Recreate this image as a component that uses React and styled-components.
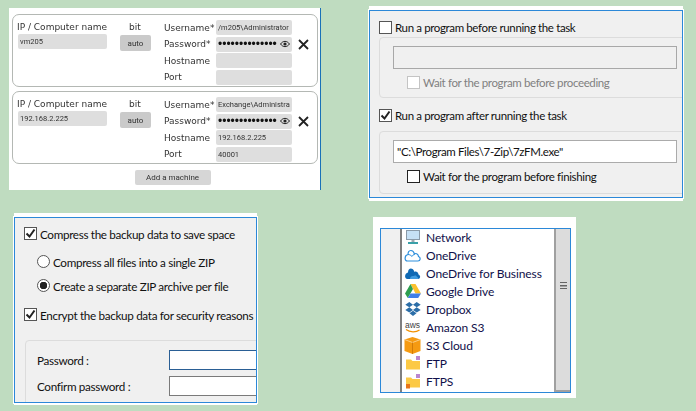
import React from 'react';
import styled, { createGlobalStyle } from 'styled-components';

const GlobalStyle = createGlobalStyle`
  html, body {
    margin: 0;
    padding: 0;
    background: #bfdcc0;
  }
`;

const machines = [
  { ip: 'vm205', user: '/m205\\Administrator', host: '', port: '' },
  { ip: '192.168.2.225', user: 'Exchange\\Administra', host: '192.168.2.225', port: '40001' },
];

const services = [
  ['Network', 'network'],
  ['OneDrive', 'onedrive'],
  ['OneDrive for Business', 'business'],
  ['Google Drive', 'gdrive'],
  ['Dropbox', 'dropbox'],
  ['Amazon S3', 'aws'],
  ['S3 Cloud', 's3'],
  ['FTP', 'ftp'],
  ['FTPS', 'ftps'],
];

const ServiceIcon = ({ kind }) => {
  if (kind === 'network') {
    return (
      <svg width="16" height="16" viewBox="0 0 16 16">
        <rect x="1.500" y="1.500" width="13" height="9" fill="#c5e0f5" stroke="#8a9aa8" />
        <rect x="6.500" y="11" width="3" height="2" fill="#a0a8b0" />
        <rect x="3" y="13" width="10" height="2" fill="#3aa0a8" />
      </svg>
    );
  }
  if (kind === 'onedrive') {
    return (
      <svg width="17" height="16" viewBox="0 0 17 16">
        <path d="M3.500 14h10.500c2.500 0 3-3.500.5-4.500C14 6.500 11.500 6 10.500 7 9 2 4 2.500 4 7.500.5 8 0 14 3.500 14z" fill="#fff" stroke="#2f8fdc" strokeWidth="1.200" />
        <path d="M4 7.500c1.500 0 3 .8 4 2M10.500 7c-1 .5-2 1.500-2.500 2.500" fill="none" stroke="#2f8fdc" />
      </svg>
    );
  }
  if (kind === 'business') {
    return (
      <svg width="17" height="16" viewBox="0 0 17 16">
        <path d="M3.500 14h10.500c2.500 0 3-3.500.5-4.500C14 6.500 11.500 6 10.500 7 9 2 4 2.500 4 7.500.5 8 0 14 3.500 14z" fill="#0f69b4" />
        <path d="M6 14c0-2.500 2-3.500 3.500-3 1-1 3.500-.5 3.500 1 1 .2 1.500 1 1 2z" fill="#3f9be0" />
      </svg>
    );
  }
  if (kind === 'gdrive') {
    return (
      <svg width="16" height="16" viewBox="0 0 16 16">
        <path d="M5.500 1h5L16 10.500h-5.500z" fill="#fbc02d" />
        <path d="M5.500 1L0 10.500 2.800 15 8 6z" fill="#2e9e4f" />
        <path d="M2.800 15h10.400L16 10.500H5.500z" fill="#3f7fe8" />
      </svg>
    );
  }
  if (kind === 'dropbox') {
    return (
      <svg width="16" height="16" viewBox="0 0 16 16" fill="#2c6ea8">
        <path d="M4.300 1L.3 3.700l4 2.600 3.700-2.600zM11.700 1L8 3.700l3.700 2.600 4-2.600zM.3 8.900l4 2.600L8 8.900 4.300 6.300zM11.700 6.300L8 8.900l3.700 2.600 4-2.600zM4.500 12.300L8 15l3.500-2.700L8 9.800z" />
      </svg>
    );
  }
  if (kind === 'aws') {
    return (
      <AwsMark>
        aws
        <svg width="16" height="4" viewBox="0 0 16 4">
          <path d="M1 .5c4 3 10 3 13.500.5" fill="none" stroke="#f29100" strokeWidth="1.200" />
        </svg>
      </AwsMark>
    );
  }
  if (kind === 's3') {
    return (
      <svg width="17" height="17" viewBox="0 0 17 17">
        <path d="M8.500 0l8 2.500v11.500l-8 3-8-3V2.500z" fill="#f59a12" />
        <path d="M.5 2.500l8 3 8-3" fill="none" stroke="#fdd9a0" strokeWidth=".8" />
        <path d="M8.500 5.500V17" stroke="#c87408" strokeWidth=".8" />
      </svg>
    );
  }
  return (
    <svg width="16" height="16" viewBox="0 0 16 16">
      <path d="M1 4.500h5L7.500 6H15v8.500H1z" fill="#fcc945" />
      <path d="M11 1h4v4h-4z" fill="#a45fc0" opacity=".75" />
      {kind === 'ftps' && <rect x="1" y="11" width="4" height="4.500" fill="#e8751a" />}
    </svg>
  );
};

const CheckMark = () => (
  <svg width="11" height="11" viewBox="0 0 11 11">
    <path d="M1.500 5.500l3 3 5-7" fill="none" stroke="#222" strokeWidth="2" />
  </svg>
);

const App = () => (
  <>
    <GlobalStyle />
    <Desktop>
      <MachineWindow>
        {machines.map((m) => (
          <MachineCard key={m.ip}>
            <IpColumn>
              <FieldLabel>IP / Computer name</FieldLabel>
              <TextBox $wide>{m.ip}</TextBox>
            </IpColumn>
            <BitColumn>
              <FieldLabel>bit</FieldLabel>
              <BitButton>auto</BitButton>
            </BitColumn>
            <CredentialGrid>
              <FieldLabel>Username*</FieldLabel>
              <TextBox>{m.user}</TextBox>
              <FieldLabel>Password*</FieldLabel>
              <TextBox>
                <Dots>••••••••••••••</Dots>
                <svg width="10" height="8" viewBox="0 0 10 8">
                  <path d="M.5 4C3 .5 7 .5 9.500 4 7 7.500 3 7.500.5 4z" fill="none" stroke="#222" />
                  <circle cx="5" cy="4" r="1.600" fill="#222" />
                </svg>
                <RemoveIcon width="11" height="11" viewBox="0 0 11 11">
                  <path d="M1 1l9 9M10 1l-9 9" stroke="#222" strokeWidth="1.800" />
                </RemoveIcon>
              </TextBox>
              <FieldLabel>Hostname</FieldLabel>
              <TextBox>{m.host}</TextBox>
              <FieldLabel>Port</FieldLabel>
              <TextBox>{m.port}</TextBox>
            </CredentialGrid>
          </MachineCard>
        ))}
        <AddButton>Add a machine</AddButton>
      </MachineWindow>

      <ProgramWindow>
        <CheckRow>
          <CheckBox />
          Run a program before running the task
        </CheckRow>
        <GroupBox $height={61} $top={3}>
          <PathInput $disabled />
          <SubCheckRow $disabled>
            <CheckBox $disabled />
            Wait for the program before proceeding
          </SubCheckRow>
        </GroupBox>
        <CheckRow $top={11}>
          <CheckBox>
            <CheckMark />
          </CheckBox>
          Run a program after running the task
        </CheckRow>
        <GroupBox $height={63} $top={9}>
          <PathInput>"C:\Program Files\7-Zip\7zFM.exe"</PathInput>
          <SubCheckRow>
            <CheckBox $dark />
            Wait for the program before finishing
          </SubCheckRow>
        </GroupBox>
      </ProgramWindow>

      <CompressWindow>
        <CheckRow>
          <CheckBox>
            <CheckMark />
          </CheckBox>
          Compress the backup data to save space
        </CheckRow>
        <RadioRow $top={15}>
          <Radio />
          Compress all files into a single ZIP
        </RadioRow>
        <RadioRow $top={11}>
          <Radio $selected />
          Create a separate ZIP archive per file
        </RadioRow>
        <CheckRow $top={16}>
          <CheckBox>
            <CheckMark />
          </CheckBox>
          Encrypt the backup data for security reasons
        </CheckRow>
        <PasswordGroup>
          <PasswordRow>
            Password :
            <PasswordInput $focused />
          </PasswordRow>
          <PasswordRow>
            Confirm password :
            <PasswordInput />
          </PasswordRow>
        </PasswordGroup>
      </CompressWindow>

      <ServiceWindow>
        <ServiceFrame>
          <LeftStrip />
          <ServiceList>
            {services.map(([name, kind]) => (
              <ServiceRow key={name}>
                <IconSlot>
                  <ServiceIcon kind={kind} />
                </IconSlot>
                {name}
              </ServiceRow>
            ))}
          </ServiceList>
          <SplitterStrip>
            <Grip />
          </SplitterStrip>
        </ServiceFrame>
      </ServiceWindow>
    </Desktop>
  </>
);

const Desktop = styled.div`
  position: relative;
  width: 696px;
  height: 411px;
  overflow: hidden;
  background: #bfdcc0;
`;

const MachineWindow = styled.div`
  position: absolute;
  left: 9px;
  top: 8px;
  width: 312px;
  height: 182px;
  box-sizing: border-box;
  padding: 6px 0 0 3px;
  background: #fff;
  border-right: 1px solid #1a70b8;
  display: flex;
  flex-direction: column;
  gap: 4px;
  font-family: 'DejaVu Sans', sans-serif;
  filter: blur(0.3px);
`;

const MachineCard = styled.div`
  width: 306px;
  height: 73px;
  box-sizing: border-box;
  border: 1px solid #b4b8b4;
  border-radius: 7px;
  padding: 5px 0 0 4px;
  display: flex;
`;

const IpColumn = styled.div`
  width: 103px;
  padding-top: 1px;
  display: flex;
  flex-direction: column;
  gap: 1px;
`;

const BitColumn = styled.div`
  width: 44px;
  padding-top: 1px;
  display: flex;
  flex-direction: column;
  align-items: flex-start;
  gap: 2px;
  & > span {
    margin-left: 9px;
  }
`;

const FieldLabel = styled.span`
  font-size: 9px;
  line-height: 12px;
  color: #333;
  white-space: nowrap;
`;

const TextBox = styled.div`
  position: relative;
  width: ${(p) => (p.$wide ? '89px' : '76px')};
  height: 15px;
  box-sizing: border-box;
  margin-left: ${(p) => (p.$wide ? '1px' : '0')};
  padding: 0 2px;
  background: #dedede;
  border-radius: 2px;
  display: flex;
  align-items: center;
  justify-content: space-between;
  overflow: visible;
  white-space: nowrap;
  font-family: 'Roboto', sans-serif;
  font-size: 7.500px;
  color: #333;
`;

const Dots = styled.span`
  font-family: 'Liberation Sans', sans-serif;
  font-size: 12px;
  line-height: 15px;
  color: #111;
`;

const RemoveIcon = styled.svg`
  position: absolute;
  left: 82px;
  top: 2px;
`;

const BitButton = styled.div`
  width: 31px;
  height: 16px;
  background: #cacaca;
  border-radius: 2px;
  display: flex;
  align-items: center;
  justify-content: center;
  font-family: 'Roboto', sans-serif;
  font-size: 8px;
  color: #333;
`;

const CredentialGrid = styled.div`
  display: grid;
  grid-template-columns: 52px 76px;
  grid-auto-rows: 15px;
  row-gap: 1.500px;
  align-items: center;
`;

const AddButton = styled.div`
  align-self: center;
  width: 76px;
  height: 15px;
  margin: 2px 0 0 13px;
  background: #d6d6d6;
  border-radius: 2px;
  display: flex;
  align-items: center;
  justify-content: center;
  font-family: 'Roboto', sans-serif;
  font-size: 8px;
  color: #333;
`;

const NativeWindow = styled.div`
  position: absolute;
  box-sizing: border-box;
  background: #f0f0f0;
  border: 1px solid #2b88d8;
  font-family: 'Lato', sans-serif;
  color: #111;
  overflow: hidden;
`;

const ProgramWindow = styled(NativeWindow)`
  left: 369px;
  top: 10px;
  width: 314px;
  height: 188px;
  padding: 10px 0 0 9px;
  font-size: 11.500px;
  letter-spacing: -0.37px;
  box-shadow: 0 0 0 1px #fff, 0 -4px 0 #fff, 0 3px 0 #fff;
`;

const CompressWindow = styled(NativeWindow)`
  left: 14px;
  top: 217px;
  width: 243px;
  height: 186px;
  padding: 9px 0 0 9px;
  font-size: 11.700px;
  letter-spacing: -0.33px;
  box-shadow: 0 0 0 1px #fff, 0 -4px 0 #fff, 0 2px 0 #fff;
`;

const CheckRow = styled.div`
  display: flex;
  align-items: center;
  gap: 3px;
  height: 13px;
  margin-top: ${(p) => p.$top || 0}px;
  white-space: nowrap;
`;

const SubCheckRow = styled(CheckRow)`
  margin: 7px 0 0 14px;
  color: ${(p) => (p.$disabled ? '#808080' : '#111')};
`;

const CheckBox = styled.span`
  width: 13px;
  height: 13px;
  flex: none;
  box-sizing: border-box;
  display: flex;
  align-items: center;
  justify-content: center;
  background: #fff;
  border: 1px solid ${(p) => (p.$disabled ? '#c4c4c4' : p.$dark ? '#222' : '#555')};
`;

const GroupBox = styled.div`
  width: 340px;
  height: ${(p) => p.$height}px;
  box-sizing: border-box;
  margin-top: ${(p) => p.$top}px;
  padding: 8px 0 0 13px;
  border: 1px solid #dcdcdc;
  border-radius: 4px;
`;

const PathInput = styled.div`
  width: 284px;
  height: 23px;
  box-sizing: border-box;
  padding-left: 3px;
  display: flex;
  align-items: center;
  background: ${(p) => (p.$disabled ? '#f0f0f0' : '#fff')};
  border: 1px solid ${(p) => (p.$disabled ? '#a8a8a8' : '#ababab')};
`;

const RadioRow = styled.div`
  display: flex;
  align-items: center;
  gap: 3px;
  height: 13px;
  margin: ${(p) => p.$top}px 0 0 13px;
  white-space: nowrap;
`;

const Radio = styled.span`
  width: 13px;
  height: 13px;
  flex: none;
  box-sizing: border-box;
  border-radius: 50%;
  border: 1px solid #555;
  background: ${(p) => (p.$selected ? 'radial-gradient(circle, #222 3.500px, #fff 4px)' : '#fff')};
`;

const PasswordGroup = styled.div`
  width: 300px;
  height: 80px;
  box-sizing: border-box;
  margin: 19px 0 0 1px;
  padding: 9px 0 0 11px;
  border: 1px solid #dcdcdc;
  border-radius: 4px;
  display: flex;
  flex-direction: column;
  gap: 6px;
`;

const PasswordRow = styled.div`
  display: grid;
  grid-template-columns: 132px 1fr;
  align-items: center;
`;

const PasswordInput = styled.div`
  width: 120px;
  height: 20px;
  box-sizing: border-box;
  background: #fff;
  border: 1px solid ${(p) => (p.$focused ? '#2a5f95' : '#7a7a7a')};
`;

const ServiceWindow = styled.div`
  position: absolute;
  left: 373px;
  top: 217px;
  width: 203px;
  height: 181px;
  box-sizing: border-box;
  padding: 11px 5px 5px 7px;
  background: #fff;
`;

const ServiceFrame = styled.div`
  height: 100%;
  box-sizing: border-box;
  border: 1px solid #2b88d8;
  display: flex;
`;

const LeftStrip = styled.div`
  width: 19px;
  background: #f0f0f0;
  border-right: 2px solid #7f7f7f;
`;

const ServiceList = styled.div`
  flex: 1;
  background: #fff;
`;

const ServiceRow = styled.div`
  height: 18px;
  box-sizing: border-box;
  padding: 0 0 2px 2px;
  display: flex;
  align-items: center;
  gap: 5px;
  font-family: 'Lato', sans-serif;
  font-size: 12px;
  letter-spacing: -0.1px;
  color: #10104a;
  white-space: nowrap;
`;

const IconSlot = styled.span`
  width: 17px;
  height: 16px;
  display: flex;
  align-items: center;
  justify-content: center;
`;

const AwsMark = styled.span`
  display: flex;
  flex-direction: column;
  align-items: center;
  font-family: 'Liberation Sans', sans-serif;
  font-size: 8.500px;
  line-height: 8px;
  color: #444;
`;

const SplitterStrip = styled.div`
  width: 16px;
  box-sizing: border-box;
  padding-top: 53px;
  background: #dcdcdc;
  border-left: 2px solid #a0a0a0;
  border-bottom: 2px solid #a0a0a0;
  display: flex;
  align-items: flex-start;
  justify-content: center;
`;

const Grip = styled.span`
  width: 7px;
  height: 7px;
  box-sizing: border-box;
  border-top: 1.500px solid #666;
  border-bottom: 1.500px solid #666;
  background: linear-gradient(#666, #666) center / 100% 1.500px no-repeat;
`;

export default App;
